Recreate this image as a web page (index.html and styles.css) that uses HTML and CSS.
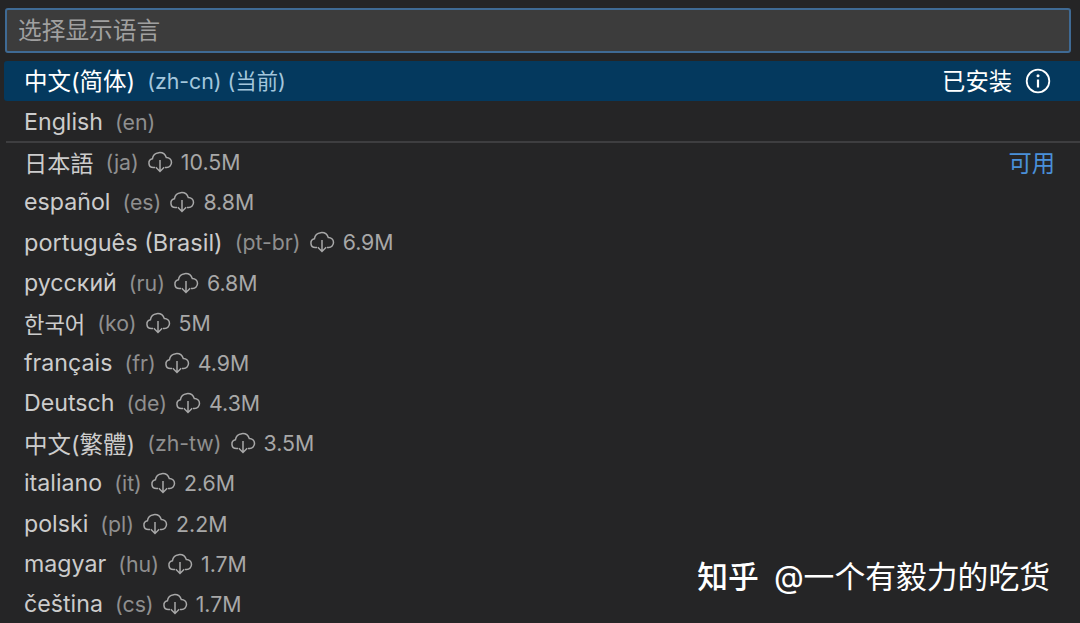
FILE: index.html
```html
<!DOCTYPE html>
<html lang="zh-CN">
<head>
    <meta charset="UTF-8">
    <title>选择显示语言</title>
    <link rel="stylesheet" href="styles.css">
</head>
<body>
<svg class="icon-defs" width="0" height="0">
    <symbol id="cloud" viewBox="0 0 26 22">
        <path d="M8 16.500H6.300a4.400 4.400 0 0 1-.9-8.700A7.200 7.200 0 0 1 19.300 6.400a5 5 0 0 1 .3 10.100H18" fill="none" stroke="currentColor" stroke-width="1.500"/>
        <path d="M13 9V20.500M8.800 16.300 13 20.500l4.200-4.200" fill="none" stroke="currentColor" stroke-width="1.500"/>
    </symbol>
</svg>
<div class="picker">
    <div class="search-wrap">
        <div class="search-box">选择显示语言</div>
    </div>
    <div class="lang-list">
        <div class="lang-row selected">
            <span class="name wide">中文(简体)</span>
            <span class="code">(zh-cn) (当前)</span>
            <span class="status">已安装</span>
            <svg class="info" viewBox="0 0 26 26">
                <circle cx="13" cy="13" r="11.300" fill="none" stroke="currentColor" stroke-width="1.800"/>
                <circle cx="13" cy="7.800" r="1.500" fill="currentColor"/>
                <path d="M13 11.500v8" stroke="currentColor" stroke-width="2.200"/>
            </svg>
        </div>
        <div class="lang-row installed">
            <span class="name">English</span>
            <span class="code">(en)</span>
        </div>
        <div class="separator"></div>
        <div class="lang-row">
            <span class="name">日本語</span>
            <span class="code">(ja)</span>
            <svg class="cloud"><use href="#cloud"/></svg>
            <span class="size">10.5M</span>
            <span class="available">可用</span>
        </div>
        <div class="lang-row">
            <span class="name">español</span>
            <span class="code">(es)</span>
            <svg class="cloud"><use href="#cloud"/></svg>
            <span class="size">8.8M</span>
        </div>
        <div class="lang-row">
            <span class="name wide">português (Brasil)</span>
            <span class="code">(pt-br)</span>
            <svg class="cloud"><use href="#cloud"/></svg>
            <span class="size">6.9M</span>
        </div>
        <div class="lang-row">
            <span class="name">русский</span>
            <span class="code">(ru)</span>
            <svg class="cloud"><use href="#cloud"/></svg>
            <span class="size">6.8M</span>
        </div>
        <div class="lang-row">
            <span class="name korean">한국어</span>
            <span class="code">(ko)</span>
            <svg class="cloud"><use href="#cloud"/></svg>
            <span class="size">5M</span>
        </div>
        <div class="lang-row">
            <span class="name">français</span>
            <span class="code">(fr)</span>
            <svg class="cloud"><use href="#cloud"/></svg>
            <span class="size">4.9M</span>
        </div>
        <div class="lang-row">
            <span class="name">Deutsch</span>
            <span class="code">(de)</span>
            <svg class="cloud"><use href="#cloud"/></svg>
            <span class="size">4.3M</span>
        </div>
        <div class="lang-row">
            <span class="name wide">中文(繁體)</span>
            <span class="code">(zh-tw)</span>
            <svg class="cloud"><use href="#cloud"/></svg>
            <span class="size">3.5M</span>
        </div>
        <div class="lang-row">
            <span class="name">italiano</span>
            <span class="code">(it)</span>
            <svg class="cloud"><use href="#cloud"/></svg>
            <span class="size">2.6M</span>
        </div>
        <div class="lang-row">
            <span class="name">polski</span>
            <span class="code">(pl)</span>
            <svg class="cloud"><use href="#cloud"/></svg>
            <span class="size">2.2M</span>
        </div>
        <div class="lang-row">
            <span class="name">magyar</span>
            <span class="code">(hu)</span>
            <svg class="cloud"><use href="#cloud"/></svg>
            <span class="size">1.7M</span>
        </div>
        <div class="lang-row">
            <span class="name">čeština</span>
            <span class="code">(cs)</span>
            <svg class="cloud"><use href="#cloud"/></svg>
            <span class="size">1.7M</span>
        </div>
    </div>
</div>
<div class="watermark"><span class="watermark-logo">知乎</span>@一个有毅力的吃货</div>
</body>
</html>
```

FILE: styles.css
```css
html, body {
    margin: 0;
    height: 100%;
    overflow: hidden;
}
body {
    position: relative;
    background-color: #252526;
    color: #cccccc;
    font-family: Inter, "Noto Sans CJK SC", sans-serif;
    font-size: 21.300px;
}
.icon-defs {
    position: absolute;
}
.picker {
    display: flex;
    flex-direction: column;
}
.search-wrap {
    padding: 8px 9px 8px 5px;
}
.search-box {
    box-sizing: border-box;
    height: 45px;
    padding: 0 0 4px 11px;
    display: flex;
    align-items: center;
    background-color: #3c3c3c;
    border: 2px solid #3f6a94;
    border-radius: 3px;
    color: #a0a0a0;
    font-size: 23.700px;
}
.lang-list {
    display: flex;
    flex-direction: column;
}
.lang-row {
    box-sizing: border-box;
    height: 40.200px;
    padding: 0 24px 3px;
    display: flex;
    align-items: center;
    white-space: nowrap;
}
.lang-row.selected {
    margin-left: 4px;
    padding-left: 20px;
    background-color: #04395e;
    border-radius: 3px 0 0 3px;
    color: #ffffff;
}
.lang-row.installed {
    padding-top: 1px;
    padding-bottom: 0;
}
.name {
    margin-right: 12px;
    font-size: 23.200px;
}
.name.wide {
    font-size: 23.500px;
}
.name.korean {
    font-size: 22.200px;
}
.code {
    color: #8f8f8f;
}
.selected .code {
    color: #a3c6dc;
}
.cloud {
    width: 26px;
    height: 22px;
    margin: 0 8px;
    color: #a8a8a8;
}
.size {
    color: #a8a8a8;
}
.status {
    margin-left: auto;
    font-size: 23.300px;
}
.info {
    width: 26px;
    height: 26px;
    margin: 3px 5px 0 13px;
}
.available {
    margin-left: auto;
    margin-right: 1px;
    color: #4a90d9;
    font-size: 23.300px;
}
.separator {
    height: 2px;
    margin-left: 6px;
    background-color: #3e3e40;
}
.watermark {
    position: absolute;
    right: 30px;
    top: 556px;
    color: #ffffff;
    font-size: 30.800px;
    line-height: 42px;
    white-space: nowrap;
}
.watermark-logo {
    margin-right: 15px;
    font-weight: 500;
}
```
